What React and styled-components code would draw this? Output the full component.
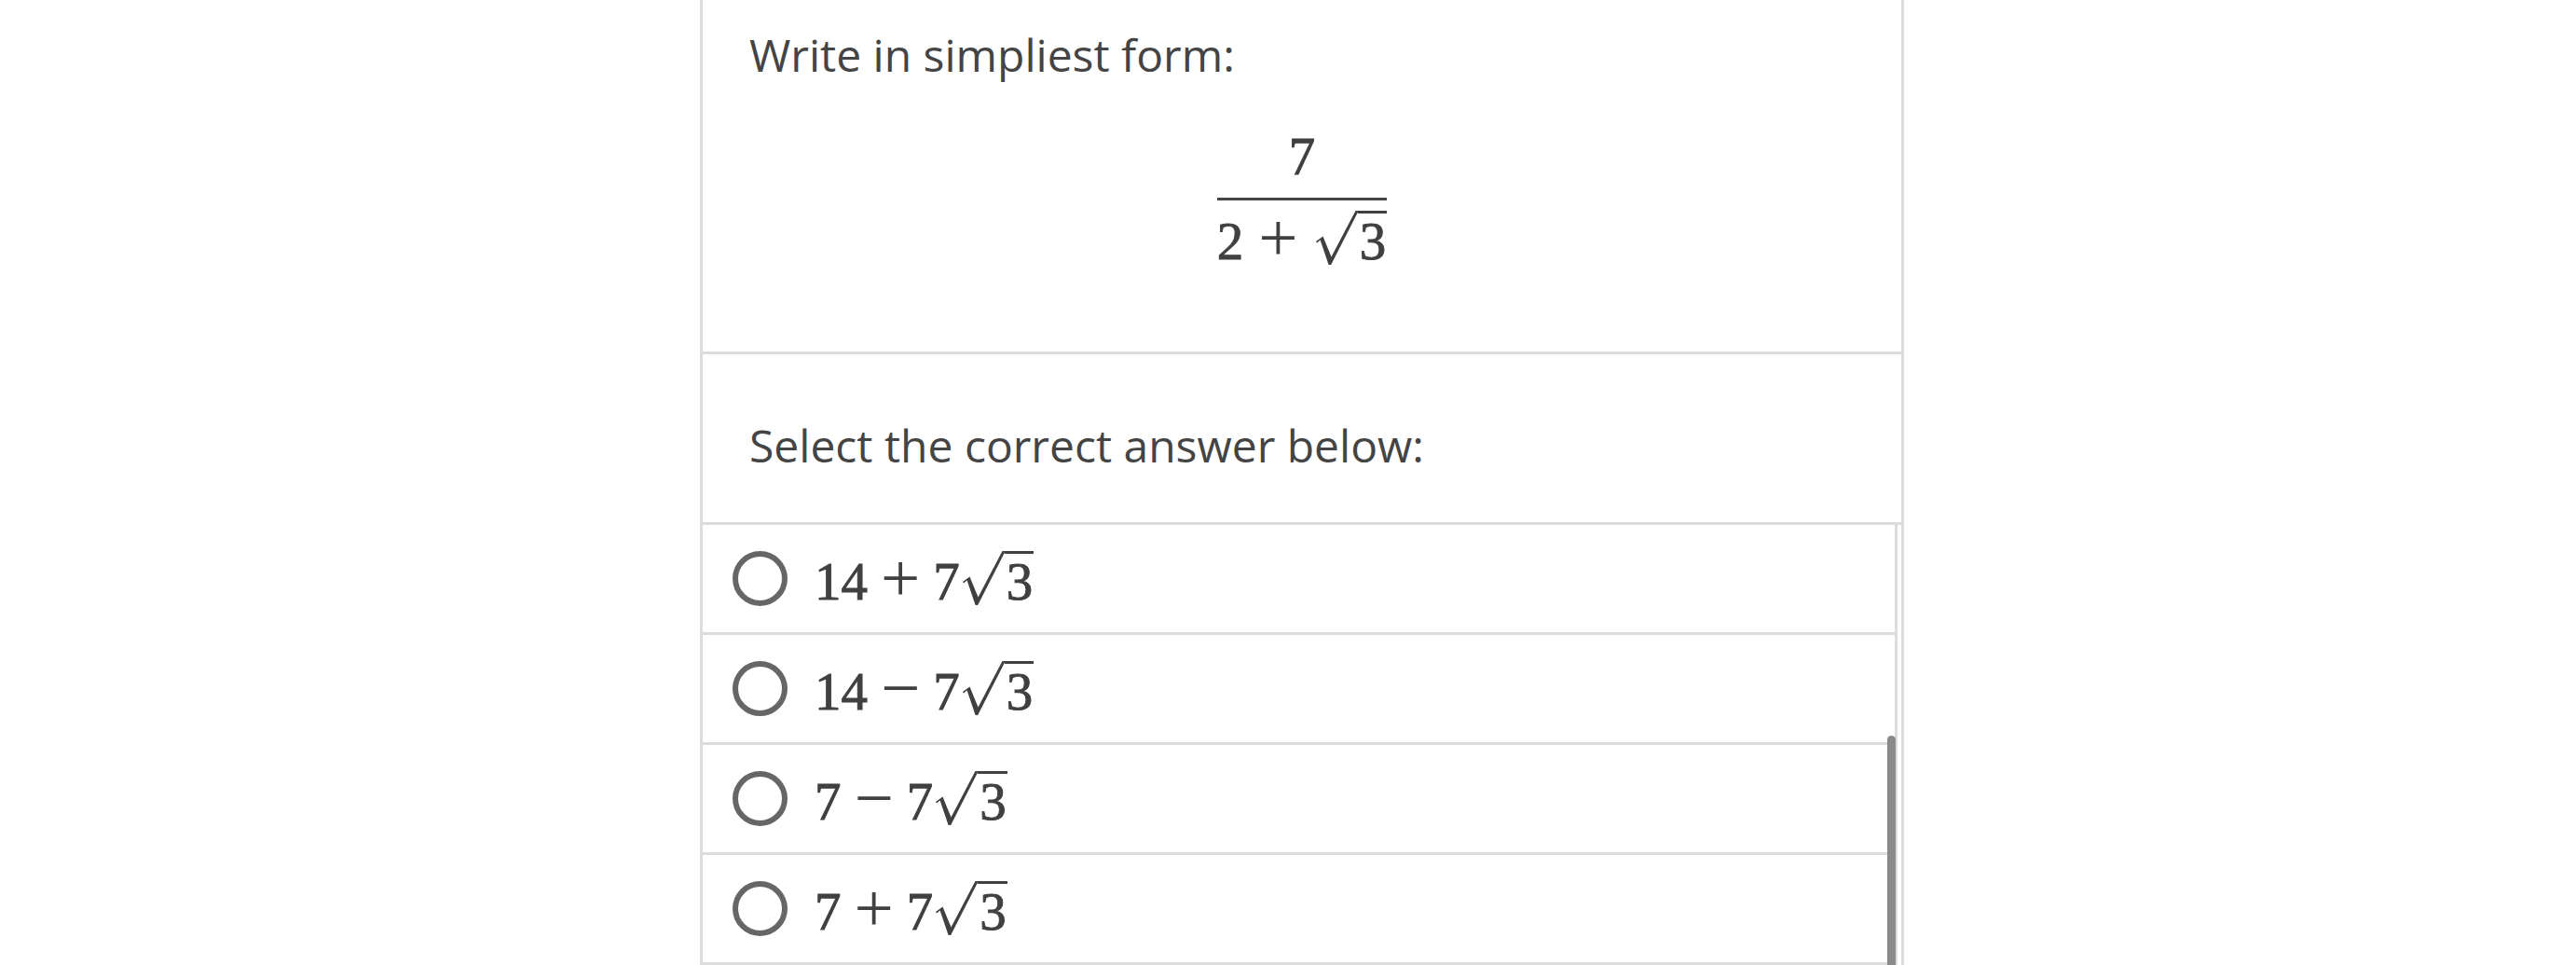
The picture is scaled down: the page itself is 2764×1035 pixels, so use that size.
import React from "react";
import styled, { createGlobalStyle } from "styled-components";

const GlobalStyle = createGlobalStyle`
  html, body {
    margin: 0;
    padding: 0;
    background: #ffffff;
    overflow: hidden;
  }
  body {
    font-family: "Open Sans", "Noto Sans", sans-serif;
    color: #444444;
  }
`;

const Page = styled.div`
  display: grid;
  grid-template-columns: 751px 1292px 1fr;
  height: 1035px;
`;

const Panel = styled.main`
  grid-column: 2;
  border-left: 3px solid #dcdcdc;
  border-right: 3px solid #dcdcdc;
  display: flex;
  flex-direction: column;
`;

const Section = styled.section`
  box-sizing: border-box;
  height: ${(p) => p.$height}px;
  padding: ${(p) => p.$padTop}px 50px 0;
  border-bottom: 3px solid #dcdcdc;
  display: flex;
  flex-direction: column;
`;

const Heading = styled.p`
  margin: 0;
  font-size: 48px;
  line-height: 64px;
  color: #444444;
`;

const FormulaRow = styled.div`
  margin-top: 48px;
  display: flex;
  justify-content: center;
`;

const Fraction = styled.span`
  display: inline-flex;
  flex-direction: column;
  align-items: center;
`;

const FracBar = styled.span`
  align-self: stretch;
  height: 3px;
  background: #444444;
  margin: 16px 0 9px;
`;

const MathLine = styled.span`
  display: inline-flex;
  align-items: baseline;
  font-family: "Liberation Serif", "Times New Roman", serif;
  font-size: 57px;
  line-height: 57px;
  color: #404040;
  -webkit-text-stroke: 0.9px currentColor;
`;

const Num = styled.span`
  line-height: 57px;
`;

const Op = styled.span`
  font-size: 75px;
  line-height: 57px;
  margin: 0 ${(p) => (p.$wide ? 16 : 14)}px;
  -webkit-text-stroke: 0;
  transform: translateY(2px);
`;

const Sqrt = styled.span`
  display: inline-flex;
  align-items: baseline;
  margin-left: 3px;
`;

const RadicalSign = styled.svg`
  align-self: flex-start;
  flex: none;
  display: block;
  width: 45px;
  height: 58px;
`;

const Radicand = styled.span`
  border-top: 3px solid currentColor;
  padding: 1px 1px 0 2px;
  line-height: 57px;
`;

const Options = styled.div`
  position: relative;
  margin-right: 4px;
  border-right: 3px solid #dcdcdc;
`;

const Option = styled.label`
  box-sizing: border-box;
  height: 118px;
  display: flex;
  align-items: center;
  gap: 29px;
  padding-left: 32px;
  border-bottom: 3px solid #dcdcdc;
  cursor: pointer;
`;

const Radio = styled.span`
  box-sizing: border-box;
  flex: none;
  width: 59px;
  height: 59px;
  border: 6px solid #666666;
  border-radius: 50%;
`;

const ScrollThumb = styled.div`
  position: absolute;
  right: -1px;
  top: 226px;
  bottom: 0;
  width: 9px;
  background: #8a8a8a;
  border-radius: 5px 5px 0 0;
`;

function Root({ children }) {
  return (
    <Sqrt>
      <RadicalSign viewBox="0 0 45 58" aria-hidden="true">
        <path
          d="M0 33 L7.5 27.5 L16.5 49.5 L42.5 0 L45 0 L45 1.5 L16.2 58 L13.6 58 L4.6 31.5 L1 34.5 Z"
          fill="currentColor"
        />
      </RadicalSign>
      <Radicand>{children}</Radicand>
    </Sqrt>
  );
}

const answers = [
  { a: "14", op: "+", b: "7" },
  { a: "14", op: "\u2212", b: "7" },
  { a: "7", op: "\u2212", b: "7" },
  { a: "7", op: "+", b: "7" },
];

export default function App() {
  return (
    <>
      <GlobalStyle />
      <Page>
        <Panel>
          <Section $height={380} $padTop={27}>
            <Heading>Write in simpliest form:</Heading>
            <FormulaRow>
              <MathLine>
                <Fraction>
                  <Num>7</Num>
                  <FracBar />
                  <MathLine>
                    <Num>2</Num>
                    <Op $wide>+</Op>
                    <Root>3</Root>
                  </MathLine>
                </Fraction>
              </MathLine>
            </FormulaRow>
          </Section>
          <Section $height={183} $padTop={66}>
            <Heading>Select the correct answer below:</Heading>
          </Section>
          <Options>
            {answers.map((o, i) => (
              <Option key={i}>
                <Radio />
                <MathLine>
                  <Num>{o.a}</Num>
                  <Op>{o.op}</Op>
                  <Num>{o.b}</Num>
                  <Root>3</Root>
                </MathLine>
              </Option>
            ))}
            <ScrollThumb />
          </Options>
        </Panel>
      </Page>
    </>
  );
}
